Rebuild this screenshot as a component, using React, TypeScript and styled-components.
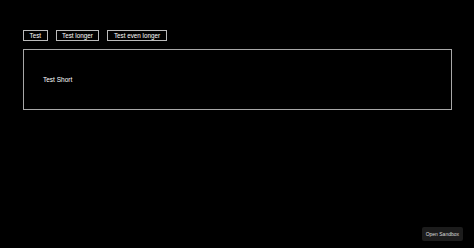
import React from 'react';
import styled, { createGlobalStyle } from 'styled-components';

const GlobalStyle = createGlobalStyle`
    html, body {
        margin: 0;
        padding: 0;
        background: #000;
        height: 100%;
    }
    body {
        font-family: "Liberation Sans", Arial, sans-serif;
        color: #fff;
    }
`;

const Page = styled.div`
    padding: 30px 22px 0 23px;
    display: flex;
    flex-direction: column;
    gap: 8px;
`;

const Toolbar = styled.div`
    display: flex;
    gap: 8px;
`;

const Tab = styled.button`
    box-sizing: border-box;
    height: 11px;
    padding: 0 5.5px;
    background: #000;
    border: 1px solid #bbb;
    color: #fff;
    font-family: "Liberation Sans", Arial, sans-serif;
    font-size: 6.3px;
    line-height: 9px;
    cursor: pointer;
`;

const Panel = styled.div`
    box-sizing: border-box;
    height: 61px;
    border: 1px solid #a8a8a8;
    padding: 0 19px;
    display: flex;
    align-items: center;
    font-size: 6.5px;
    color: #fff;
`;

const SandboxButton = styled.button`
    position: fixed;
    right: 11px;
    bottom: 7px;
    height: 14px;
    padding: 0 4px;
    background: #1c1c1c;
    border: none;
    border-radius: 2px;
    color: #ddd;
    font-family: "Liberation Sans", Arial, sans-serif;
    font-size: 5px;
`;

const tabs = ['Test', 'Test longer', 'Test even longer'];

const App = () => {
    return (
        <>
            <GlobalStyle />
            <Page>
                <Toolbar>
                    {tabs.map(t => <Tab key={t}>{t}</Tab>)}
                </Toolbar>
                <Panel>Test Short</Panel>
            </Page>
            <SandboxButton>Open Sandbox</SandboxButton>
        </>
    );
};

export default App;
